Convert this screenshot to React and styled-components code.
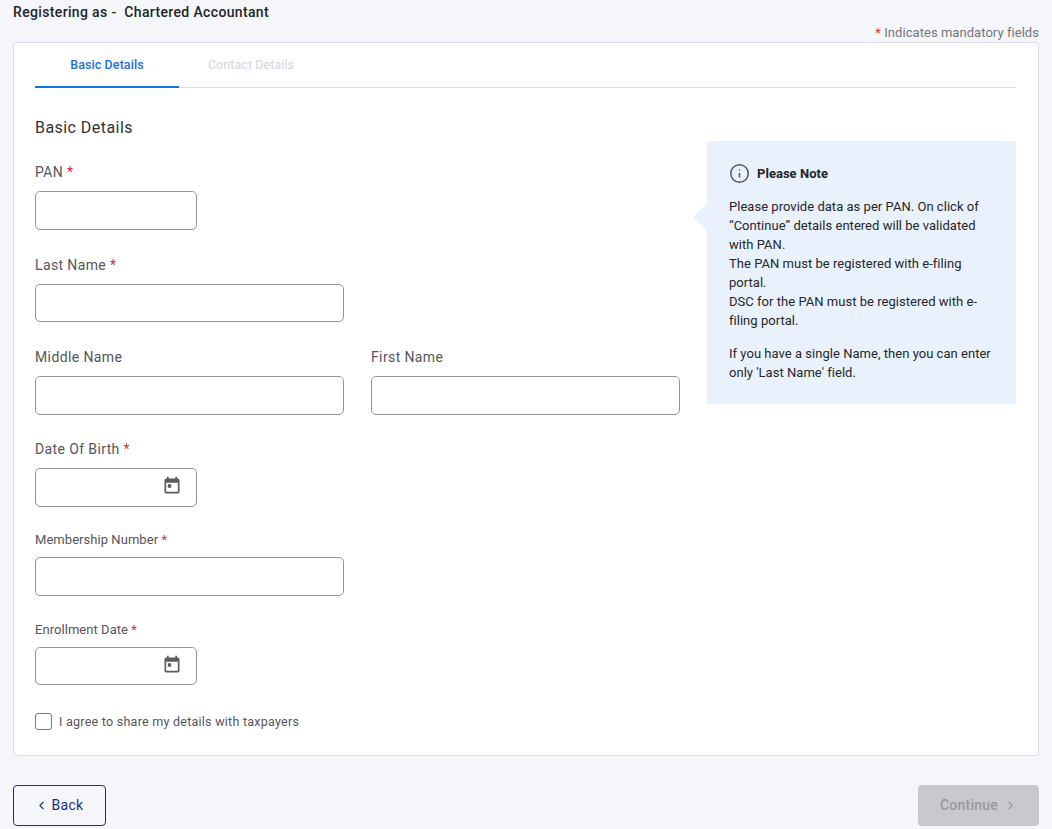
import React from 'react';
import styled, { createGlobalStyle } from 'styled-components';
import { Info, ChevronLeft, ChevronRight } from 'lucide-react';

const GlobalStyle = createGlobalStyle`
  html, body {
    margin: 0;
    padding: 0;
    background: #f5f6fa;
    font-family: Roboto, "Liberation Sans", sans-serif;
    color: #212529;
  }
  * { box-sizing: border-box; }
`;

const Page = styled.div`
  width: 1052px;
  height: 829px;
  padding: 3px 13px 0;
  overflow: hidden;
`;

const Title = styled.div`
  font-size: 14px;
  line-height: 18px;
  font-weight: 500;
  letter-spacing: 0.35px;
  color: #212529;
  span { margin-left: 4px; }
`;

const MandatoryNote = styled.div`
  text-align: right;
  font-size: 13px;
  line-height: 18px;
  letter-spacing: 0.05px;
  margin-top: 3px;
  color: #73757f;
  span { color: #d9303a; }
`;

const Card = styled.div`
  height: 714px;
  background: #fff;
  border: 1px solid #dcdcea;
  border-radius: 4px;
  padding: 0 22px 0 21px;
`;

const Tabs = styled.div`
  display: flex;
  height: 45px;
  border-bottom: 1px solid #dcdce4;
`;

const Tab = styled.div`
  width: 144px;
  height: 45px;
  display: flex;
  align-items: center;
  justify-content: center;
  font-size: 12.5px;
  letter-spacing: 0.08px;
  font-weight: ${p => (p.$active ? 500 : 400)};
  color: ${p => (p.$active ? '#1c6fd9' : '#d5d5da')};
  border-bottom: 2px solid ${p => (p.$active ? '#0f75e0' : 'transparent')};
`;

const Content = styled.div`
  display: flex;
  justify-content: space-between;
`;

const FormCol = styled.div`
  width: 645px;
`;

const Heading = styled.h2`
  margin: 29px 0 0;
  font-size: 16px;
  line-height: 22px;
  font-weight: 400;
  letter-spacing: 0.45px;
  color: #333;
`;

const Field = styled.div`
  width: ${p => p.$width || 309}px;
  margin-top: ${p => p.$top ?? 25}px;
`;

const Label = styled.label`
  display: block;
  height: 20px;
  line-height: ${p => (p.$small ? 22 : 20)}px;
  font-size: ${p => (p.$small ? 13 : 14)}px;
  letter-spacing: ${p => (p.$small ? 0.05 : 0.38)}px;
  color: #55555a;
  margin-bottom: ${p => (p.$small ? 8 : 9)}px;
  b { color: #d9303a; font-weight: 400; }
`;

const InputBox = styled.div`
  height: 38.5px;
  border: 1px solid #949494;
  border-radius: 5px;
  background: #fff;
  display: flex;
  align-items: center;
  justify-content: flex-end;
  padding: 0 14px 2px 0;
  color: #5c5c5f;
`;

const Row = styled.div`
  display: flex;
  gap: 27px;
`;

const CheckRow = styled.div`
  display: flex;
  align-items: center;
  gap: 7px;
  margin-top: 27.5px;
  font-size: 12.5px;
  letter-spacing: 0.25px;
  color: #55555a;
`;

const CheckBox = styled.span`
  width: 17px;
  height: 17px;
  border: 1px solid #77777b;
  border-radius: 3px;
  background: #fff;
`;

const NoteBox = styled.aside`
  position: relative;
  width: 309px;
  height: 263px;
  margin-top: 53px;
  padding: 22px 22px 0;
  background: #e9f2fc;
  font-size: 13px;
  line-height: 19px;
  letter-spacing: 0.03px;
  color: #26262b;
  &::before {
    content: '';
    position: absolute;
    left: -14px;
    top: 62px;
    border-style: solid;
    border-width: 14px 14px 14px 0;
    border-color: transparent #e9f2fc transparent transparent;
  }
`;

const NoteHead = styled.div`
  display: flex;
  align-items: center;
  gap: 7px;
  height: 21px;
  font-weight: 700;
  font-size: 13px;
  color: #212529;
  margin-bottom: 13px;
  svg { color: #55565b; }
`;

const NotePara = styled.p`
  margin: 0 0 14px;
`;

const Footer = styled.div`
  display: flex;
  justify-content: space-between;
  margin-top: 29px;
`;

const BackButton = styled.button`
  width: 93px;
  height: 41px;
  display: flex;
  align-items: center;
  justify-content: center;
  gap: 3px;
  padding: 0 0 1px;
  background: transparent;
  border: 1px solid #1d2f7c;
  border-radius: 4px;
  color: #1d2f7c;
  font: 400 14px Roboto, sans-serif;
  letter-spacing: 0.35px;
`;

const ContinueButton = styled.button`
  width: 121px;
  height: 41px;
  display: flex;
  align-items: center;
  justify-content: center;
  gap: 6px;
  padding: 0 0 1px;
  background: #c9c8cd;
  border: none;
  border-radius: 4px;
  color: #98979c;
  font: 500 14px Roboto, sans-serif;
  letter-spacing: 0.25px;
`;

const CalendarIcon = () => (
  <svg width="20" height="20" viewBox="0 0 24 24" fill="currentColor">
    <path d="M19 3h-1V1h-2v2H8V1H6v2H5c-1.11 0-1.99.9-1.99 2L3 19c0 1.1.89 2 2 2h14c1.1 0 2-.9 2-2V5c0-1.1-.9-2-2-2zm0 16H5V8h14v11zM7 10h4v4H7z" />
  </svg>
);

const Required = () => <b>*</b>;

const App = () => (
  <Page>
    <GlobalStyle />
    <Title>
      Registering as - <span>Chartered Accountant</span>
    </Title>
    <MandatoryNote>
      <span>*</span> Indicates mandatory fields
    </MandatoryNote>
    <Card>
      <Tabs>
        <Tab $active>Basic Details</Tab>
        <Tab>Contact Details</Tab>
      </Tabs>
      <Content>
        <FormCol>
          <Heading>Basic Details</Heading>
          <Field $width={162} $top={23}>
            <Label>PAN <Required /></Label>
            <InputBox />
          </Field>
          <Field>
            <Label>Last Name <Required /></Label>
            <InputBox />
          </Field>
          <Row>
            <Field>
              <Label>Middle Name</Label>
              <InputBox />
            </Field>
            <Field>
              <Label>First Name</Label>
              <InputBox />
            </Field>
          </Row>
          <Field $width={162} $top={24.5}>
            <Label>Date Of Birth <Required /></Label>
            <InputBox><CalendarIcon /></InputBox>
          </Field>
          <Field $top={22.5}>
            <Label $small>Membership Number <Required /></Label>
            <InputBox />
          </Field>
          <Field $width={162} $top={23}>
            <Label $small>Enrollment Date <Required /></Label>
            <InputBox><CalendarIcon /></InputBox>
          </Field>
          <CheckRow>
            <CheckBox />
            I agree to share my details with taxpayers
          </CheckRow>
        </FormCol>
        <NoteBox>
          <NoteHead>
            <Info size={21} strokeWidth={1.7} />
            Please Note
          </NoteHead>
          <NotePara>
            Please provide data as per PAN. On click of “Continue” details entered will be validated with PAN.
            <br />
            The PAN must be registered with e-filing portal.
            <br />
            DSC for the PAN must be registered with e-filing portal.
          </NotePara>
          <NotePara>If you have a single Name, then you can enter only 'Last Name' field.</NotePara>
        </NoteBox>
      </Content>
    </Card>
    <Footer>
      <BackButton><ChevronLeft size={13} />Back</BackButton>
      <ContinueButton>Continue<ChevronRight size={13} /></ContinueButton>
    </Footer>
  </Page>
);

export default App;
